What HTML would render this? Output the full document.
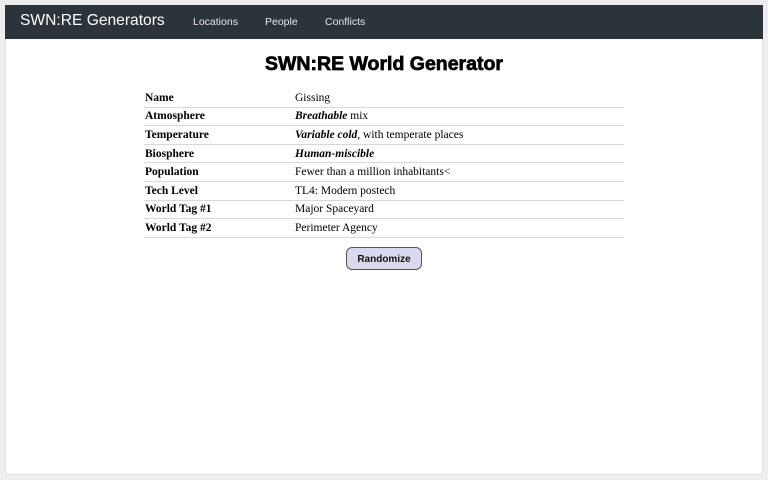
<!DOCTYPE html>
<html><head><meta charset="utf-8"><style>
html,body{margin:0;padding:0;}
body{width:768px;height:480px;background:#eeeeee;position:relative;overflow:hidden;font-family:"Liberation Serif",serif;}
.nav{position:absolute;left:5px;top:5px;width:758px;height:34px;background:#2b343b;}
.brand{position:absolute;left:15px;top:7px;color:#fff;font:15.6px "Liberation Sans",sans-serif;}
.nav a{position:absolute;top:11px;color:#e6e6e6;font:10.5px "Liberation Sans",sans-serif;text-decoration:none;}
.main{position:absolute;left:5px;top:39px;width:756px;height:435px;background:#fff;border:1px solid #ddd;border-top:none;}
h1{position:absolute;left:0;width:768px;top:53px;margin:0;text-align:center;font:bold 19.5px "Liberation Sans",sans-serif;-webkit-text-stroke:0.7px #000;color:#000;}
table{position:absolute;left:144px;top:89px;width:480px;border-collapse:collapse;font-size:11.5px;}
td{height:17.6px;padding:0 1px;border-bottom:1px solid #d8d8d8;vertical-align:middle;}
td:first-child{width:148px;font-weight:bold;}
.btn{position:absolute;left:346px;top:247px;width:74px;height:21px;border:1px solid #555;border-radius:6px;background:#d9d9ee;font:bold 10px "Liberation Sans",sans-serif;text-align:center;line-height:23px;color:#111;}
</style></head><body>
<div class="nav"><div class="brand">SWN:RE Generators</div>
<a style="left:188px">Locations</a><a style="left:260px">People</a><a style="left:320px">Conflicts</a></div>
<div class="main"></div>
<h1>SWN:RE World Generator</h1>
<table>
<tr><td>Name</td><td>Gissing</td></tr>
<tr><td>Atmosphere</td><td><b><i>Breathable</i></b> mix</td></tr>
<tr><td>Temperature</td><td><b><i>Variable cold</i></b>, with temperate places</td></tr>
<tr><td>Biosphere</td><td><b><i>Human-miscible</i></b></td></tr>
<tr><td>Population</td><td>Fewer than a million inhabitants&lt;</td></tr>
<tr><td>Tech Level</td><td>TL4: Modern postech</td></tr>
<tr><td>World Tag #1</td><td>Major Spaceyard</td></tr>
<tr><td>World Tag #2</td><td>Perimeter Agency</td></tr>
</table>
<div class="btn">Randomize</div>
</body></html>
